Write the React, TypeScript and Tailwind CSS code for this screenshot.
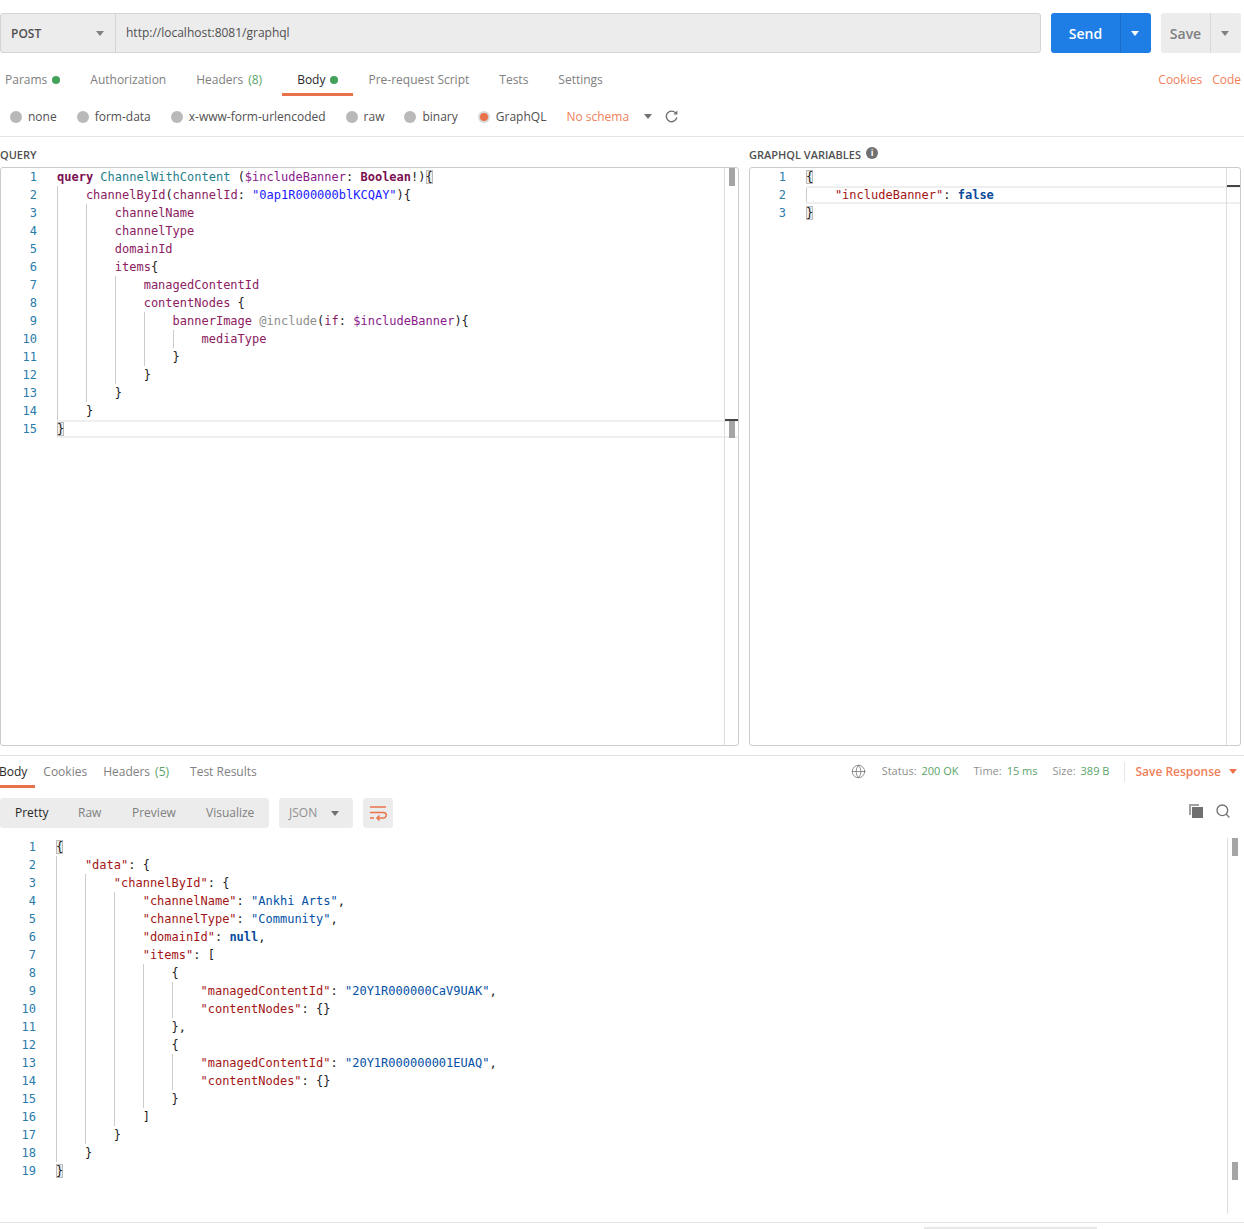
import { Globe, Search } from "lucide-react";

type Tok = [keyof typeof tokenClass, string];
type Line = { indent: number; toks: Tok[]; active?: boolean };

const tokenClass = {
  k: "font-bold text-[#7b1150]",
  n: "text-[#1f7f8c]",
  v: "text-[#8a1a8c]",
  f: "text-[#8c2060]",
  s: "text-[#1a1aff]",
  p: "text-[#1a1a1a]",
  a: "text-[#8e8e8e]",
  j: "text-[#a31515]",
  q: "text-[#0451a5]",
  b: "font-bold text-[#0b4a9c]",
  m: "text-[#1a1a1a] bg-[#eeeeee] shadow-[inset_0_0_0_1px_#bbbbbb]",
};

const queryLines: Line[] = [
  { indent: 0, toks: [["k", "query"], ["p", " "], ["n", "ChannelWithContent"], ["p", " ("], ["v", "$includeBanner"], ["p", ": "], ["k", "Boolean"], ["p", "!)"], ["m", "{"]] },
  { indent: 1, toks: [["f", "channelById"], ["p", "("], ["f", "channelId"], ["p", ": "], ["s", '"0ap1R000000blKCQAY"'], ["p", "){"]] },
  { indent: 2, toks: [["f", "channelName"]] },
  { indent: 2, toks: [["f", "channelType"]] },
  { indent: 2, toks: [["f", "domainId"]] },
  { indent: 2, toks: [["f", "items"], ["p", "{"]] },
  { indent: 3, toks: [["f", "managedContentId"]] },
  { indent: 3, toks: [["f", "contentNodes"], ["p", " {"]] },
  { indent: 4, toks: [["f", "bannerImage"], ["p", " "], ["a", "@include"], ["p", "("], ["f", "if"], ["p", ": "], ["v", "$includeBanner"], ["p", "){"]] },
  { indent: 5, toks: [["f", "mediaType"]] },
  { indent: 4, toks: [["p", "}"]] },
  { indent: 3, toks: [["p", "}"]] },
  { indent: 2, toks: [["p", "}"]] },
  { indent: 1, toks: [["p", "}"]] },
  { indent: 0, toks: [["m", "}"]], active: true },
];

const variableLines: Line[] = [
  { indent: 0, toks: [["m", "{"]] },
  { indent: 1, toks: [["j", '"includeBanner"'], ["p", ": "], ["b", "false"]], active: true },
  { indent: 0, toks: [["m", "}"]] },
];

const item = (id: string): Line[] => [
  { indent: 4, toks: [["p", "{"]] },
  { indent: 5, toks: [["j", '"managedContentId"'], ["p", ": "], ["q", `"${id}"`], ["p", ","]] },
  { indent: 5, toks: [["j", '"contentNodes"'], ["p", ": {}"]] },
];

const responseLines: Line[] = [
  { indent: 0, toks: [["m", "{"]] },
  { indent: 1, toks: [["j", '"data"'], ["p", ": {"]] },
  { indent: 2, toks: [["j", '"channelById"'], ["p", ": {"]] },
  { indent: 3, toks: [["j", '"channelName"'], ["p", ": "], ["q", '"Ankhi Arts"'], ["p", ","]] },
  { indent: 3, toks: [["j", '"channelType"'], ["p", ": "], ["q", '"Community"'], ["p", ","]] },
  { indent: 3, toks: [["j", '"domainId"'], ["p", ": "], ["b", "null"], ["p", ","]] },
  { indent: 3, toks: [["j", '"items"'], ["p", ": ["]] },
  ...item("20Y1R000000CaV9UAK"),
  { indent: 4, toks: [["p", "},"]] },
  ...item("20Y1R000000001EUAQ"),
  { indent: 4, toks: [["p", "}"]] },
  { indent: 3, toks: [["p", "]"]] },
  { indent: 2, toks: [["p", "}"]] },
  { indent: 1, toks: [["p", "}"]] },
  { indent: 0, toks: [["m", "}"]] },
];

function CodeLines({ lines }: { lines: Line[] }) {
  return (
    <div className="flex-1 min-w-0 font-['DejaVu_Sans_Mono',monospace] text-[12px] leading-[18px]">
      {lines.map((line, i) => (
        <div
          key={i}
          className={`flex h-[18px] whitespace-pre ${line.active ? "border-y-2 border-[#efefef] -mr-[14px] leading-[14px]" : ""}`}
        >
          {Array.from({ length: line.indent }).map((_, g) => (
            <span key={g} className="w-[4ch] shrink-0 border-l border-[#cccccc]" />
          ))}
          <span>
            {line.toks.map(([type, text], t) => (
              <span key={t} className={tokenClass[type]}>{text}</span>
            ))}
          </span>
        </div>
      ))}
    </div>
  );
}

function Gutter({ count, width, pad }: { count: number; width: string; pad: string }) {
  return (
    <div className={`${width} ${pad} shrink-0 text-right font-['DejaVu_Sans_Mono',monospace] text-[12px] leading-[18px] text-[#2b7bab]`}>
      {Array.from({ length: count }).map((_, i) => (
        <div key={i} className="h-[18px]">{i + 1}</div>
      ))}
    </div>
  );
}

function Caret({ color }: { color: string }) {
  return <span className={`inline-block w-0 h-0 border-x-[4px] border-x-transparent border-t-[5px] ${color}`} />;
}

function Dot() {
  return <span className="inline-block w-2 h-2 rounded-full bg-[#45a15a] ml-[5px]" />;
}

function Tab({ label, count, dot, active }: { label: string; count?: string; dot?: boolean; active?: boolean }) {
  return (
    <div className={`h-[33px] pt-[3px] px-[15px] flex items-center border-b-[3px] ${active ? "border-[#e8734a] text-[#282828]" : "border-transparent text-[#808080]"}`}>
      <span>{label}</span>
      {count && <span className="ml-[5px] mr-[5px] text-[#5aa469]">{count}</span>}
      {dot && <Dot />}
    </div>
  );
}

function RespTab({ label, count, active }: { label: string; count?: string; active?: boolean }) {
  return (
    <div className={`h-[32px] pt-[2px] px-2 flex items-center border-b-[3px] ${active ? "border-[#e8734a] text-[#282828]" : "border-transparent text-[#808080]"}`}>
      <span>{label}</span>
      {count && <span className="ml-[5px] mr-[5px] text-[#5aa469]">{count}</span>}
    </div>
  );
}

function Radio({ label, on }: { label: string; on?: boolean }) {
  return (
    <div className="flex items-center gap-[6px]">
      <span className={`w-3 h-3 rounded-full flex items-center justify-center ${on ? "bg-[#d9d9d9]" : "bg-[#b9b9b9]"}`}>
        {on && <span className="w-2 h-2 rounded-full bg-[#e8734a]" />}
      </span>
      <span className="text-[#505050]">{label}</span>
    </div>
  );
}

function Stat({ label, value }: { label: string; value: string }) {
  return (
    <span className="flex gap-[5px]">
      <span className="text-[#909090]">{label}</span>
      <span className="text-[#5aa469]">{value}</span>
    </span>
  );
}

export default function App() {
  return (
    <div className="w-[1244px] h-[1229px] overflow-hidden bg-white flex flex-col font-['Open_Sans',sans-serif] text-[12px] text-[#808080]">
      {/* url bar */}
      <div className="flex h-10 mt-[13px] pr-[3px] gap-[10px] shrink-0">
        <div className="flex-1 flex bg-[#ececec] border border-[#d4d4d4] rounded-[3px]">
          <div className="w-[115px] shrink-0 pl-[10px] pr-[11px] flex items-center justify-between border-r border-[#d4d4d4] font-semibold text-[#505050]">
            <span className="mt-[1px]">POST</span>
            <Caret color="border-t-[#808080]" />
          </div>
          <div className="flex-1 pl-[10px] flex items-center text-[#505050] -mt-[1px]">http://localhost:8081/graphql</div>
        </div>
        <div className="w-[100px] flex bg-[#1e7ee6] rounded-[3px] text-white text-[14px] font-semibold">
          <div className="w-[70px] flex items-center justify-center border-r border-[#1a6cc6]">Send</div>
          <div className="flex-1 flex items-center justify-center pr-[2px]"><Caret color="border-t-white" /></div>
        </div>
        <div className="w-20 flex bg-[#ececec] rounded-[3px] text-[#808080] text-[14px] font-semibold">
          <div className="w-[50px] flex items-center justify-center border-r border-[#d9d9d9]">Save</div>
          <div className="flex-1 flex items-center justify-center pr-[2px]"><Caret color="border-t-[#808080]" /></div>
        </div>
      </div>

      {/* request tabs */}
      <div className="flex items-start justify-between mt-[10px] pr-[3px] h-[33px] shrink-0">
        <div className="flex -ml-[10px]">
          <Tab label="Params" dot />
          <Tab label="Authorization" />
          <Tab label="Headers" count="(8)" />
          <Tab label="Body" dot active />
          <Tab label="Pre-request Script" />
          <Tab label="Tests" />
          <Tab label="Settings" />
        </div>
        <div className="flex h-[33px] items-center gap-[10px] text-[#f0805a]">
          <span>Cookies</span>
          <span>Code</span>
        </div>
      </div>

      {/* body types */}
      <div className="h-[41px] shrink-0 pl-[10px] pt-[1px] flex items-center gap-5 border-b border-[#e6e6e6]">
        <Radio label="none" />
        <Radio label="form-data" />
        <Radio label="x-www-form-urlencoded" />
        <Radio label="raw" />
        <Radio label="binary" />
        <Radio label="GraphQL" on />
        <div className="flex items-center">
          <span className="text-[#f0805a] mt-[1px]">No schema</span>
          <span className="ml-[15px] flex"><Caret color="border-t-[#707070]" /></span>
          <svg className="ml-[13px] -mt-[1px]" width="13" height="13" viewBox="0 0 13 13" fill="none">
            <path d="M11 3.4A5.3 5.3 0 1 0 11.8 7.5" stroke="#707070" strokeWidth="1.4" />
            <path d="M12.4 0.6V4.6H8.4Z" fill="#707070" />
          </svg>
        </div>
      </div>

      {/* query + variables */}
      <div className="flex gap-[10px] pr-[3px] h-[609px] shrink-0">
        <div className="w-[739px] flex flex-col">
          <div className="h-[30px] pt-[10px] text-[11px] leading-[15px] font-semibold text-[#505050]">QUERY</div>
          <div className="flex-1 flex border border-[#cccccc] rounded-[3px] min-h-0">
            <Gutter count={15} width="w-[56px]" pad="pr-[20px]" />
            <CodeLines lines={queryLines} />
            <div className="relative w-[14px] shrink-0 border-l border-[#dddddd]">
              <span className="absolute left-[4px] top-0 w-[6px] h-[18px] bg-[#a5a5a5]" />
              <span className="absolute left-0 right-0 top-[251px] h-[2px] bg-[#444444]" />
              <span className="absolute left-[4px] top-[253px] w-[6px] h-[17px] bg-[#a5a5a5]" />
            </div>
          </div>
        </div>
        <div className="flex-1 flex flex-col">
          <div className="h-[30px] pt-[10px] text-[11px] leading-[15px] font-semibold text-[#505050] flex items-start gap-[5px]">
            <span>GRAPHQL VARIABLES</span>
            <span className="w-3 h-3 rounded-full bg-[#707070] text-white text-[9px] leading-[12px] font-bold text-center">i</span>
          </div>
          <div className="flex-1 flex border border-[#cccccc] rounded-[3px] min-h-0">
            <Gutter count={3} width="w-[36px]" pad="pr-0" />
            <div className="w-[20px] shrink-0" />
            <CodeLines lines={variableLines} />
            <div className="relative w-[14px] shrink-0 border-l border-[#dddddd]">
              <span className="absolute left-0 right-0 top-[17px] h-[2px] bg-[#444444]" />
            </div>
          </div>
        </div>
      </div>

      {/* response tabs */}
      <div className="mt-[9px] h-[34px] border-t border-[#e2e2e2] flex items-start justify-between pr-[3px] shrink-0">
        <div className="flex -ml-[9px]">
          <RespTab label="Body" active />
          <RespTab label="Cookies" />
          <RespTab label="Headers" count="(5)" />
          <RespTab label="Test Results" />
        </div>
        <div className="flex items-center h-[31px] text-[11px]">
          <Globe size={15} strokeWidth={1.2} className="text-[#707070]" />
          <div className="flex gap-[15px] ml-4">
            <Stat label="Status:" value="200 OK" />
            <Stat label="Time:" value="15 ms" />
            <Stat label="Size:" value="389 B" />
          </div>
          <span className="w-px h-5 bg-[#e6e6e6] ml-[15px]" />
          <span className="ml-[10px] text-[12px] font-semibold text-[#f0805a]">Save Response</span>
          <span className="ml-2 mr-1 flex"><Caret color="border-t-[#f0704a]" /></span>
        </div>
      </div>

      {/* response toolbar */}
      <div className="mt-[9px] h-[30px] flex items-center gap-[10px] pr-[13px] shrink-0">
        <div className="w-[269px] h-full bg-[#ececec] rounded-[3px] flex items-center pl-[15px]">
          <span className="text-[#282828] w-[63px]">Pretty</span>
          <span className="w-[54px]">Raw</span>
          <span className="w-[74px]">Preview</span>
          <span>Visualize</span>
        </div>
        <div className="w-[74px] h-full bg-[#ececec] rounded-[3px] flex items-center justify-between pl-[10px] pr-[14px] text-[#909090]">
          <span>JSON</span>
          <Caret color="border-t-[#707070]" />
        </div>
        <div className="w-[30px] h-full bg-[#ececec] rounded-[3px] flex items-center justify-center">
          <svg width="18" height="16" viewBox="0 0 18 16" fill="none" stroke="#e8734a" strokeWidth="1.5">
            <path d="M1 2H17M1 7.5H14.5A2.6 2.6 0 0 1 14.5 13H8.5" />
            <path d="M1 13H5" />
            <path d="M10.5 10.5L8 13L10.5 15.5" />
          </svg>
        </div>
        <div className="flex-1 flex items-center justify-end gap-3 -mt-[4px]">
          <svg width="14" height="14" viewBox="0 0 14 14" fill="#707070">
            <path d="M0 0H10V2H2V11H0Z" fill="#a0a0a0" />
            <rect x="3" y="3" width="11" height="11" />
          </svg>
          <Search size={16} strokeWidth={2} className="text-[#707070]" />
        </div>
      </div>

      {/* response body */}
      <div className="mt-[10px] h-[376px] flex shrink-0">
        <Gutter count={19} width="w-[56px]" pad="pr-[20px]" />
        <CodeLines lines={responseLines} />
        <div className="relative w-[17px] shrink-0 border-l border-[#dddddd]">
          <span className="absolute left-[4px] top-0 w-[6px] h-[18px] bg-[#a5a5a5]" />
          <span className="absolute left-[4px] top-[324px] w-[6px] h-[18px] bg-[#a5a5a5]" />
        </div>
      </div>

      <div className="mt-[8px] border-t border-[#e2e2e2] shrink-0 pl-[924px] pt-1">
        <div className="w-[173px] h-[2px] bg-[#e8e8e8]" />
      </div>
    </div>
  );
}
